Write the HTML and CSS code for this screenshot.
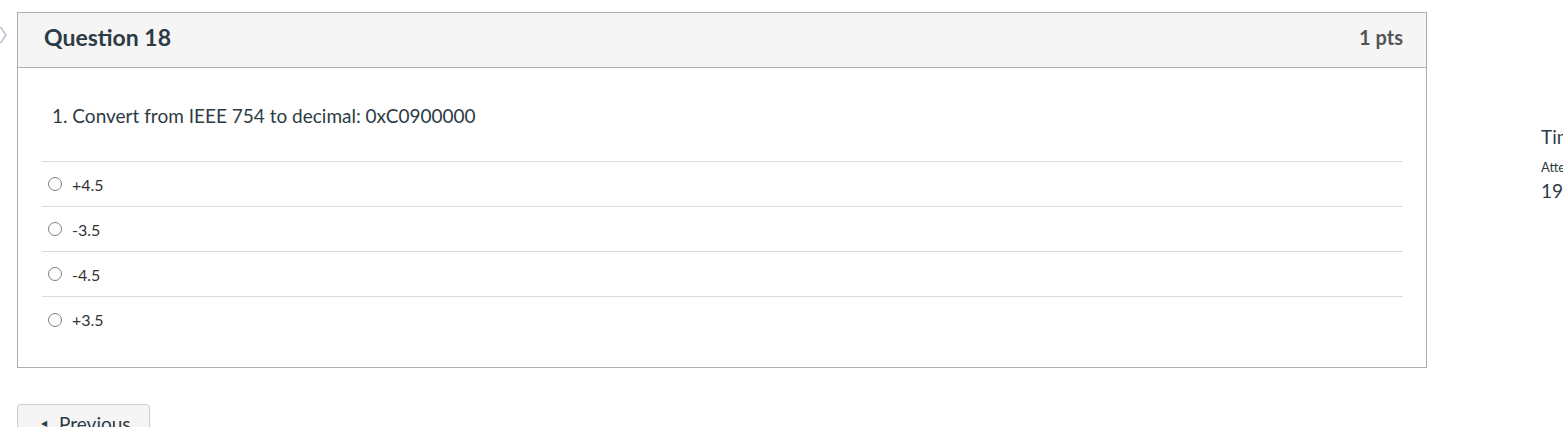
FILE: index.html
```
<!DOCTYPE html>
<html lang="en">
<head>
    <meta charset="UTF-8">
    <title>Quiz - Question 18</title>
    <link rel="stylesheet" href="styles.css">
</head>
<body>
    <div class="page">
        <div class="quiz-column">
            <div class="question-wrap">
                <svg class="flag-marker" width="10" height="20" viewBox="0 0 10 20">
                    <path d="M0.5 2 L6 10 L0.5 18" fill="none" stroke="#b8c4d0" stroke-width="1.6"/>
                </svg>
                <div class="question">
                    <div class="question-header">
                        <span class="question-name">Question 18</span>
                        <span class="question-points">1 pts</span>
                    </div>
                    <div class="question-body">
                        <div class="question-text">1. Convert from IEEE 754 to decimal: 0xC0900000</div>
                        <div class="answers">
                            <label class="answer"><span class="radio"></span>+4.5</label>
                            <label class="answer"><span class="radio"></span>-3.5</label>
                            <label class="answer"><span class="radio"></span>-4.5</label>
                            <label class="answer"><span class="radio"></span>+3.5</label>
                        </div>
                    </div>
                </div>
            </div>
            <div class="nav-buttons">
                <button class="nav-button"><span class="arrow">&#9664;</span>Previous</button>
            </div>
        </div>
        <div class="sidebar">
            <div class="timer-title">Time Running:</div>
            <div class="attempt-label">Attempt due: Oct 19 at 11:59pm</div>
            <div class="timer-value">19 Minutes, 42 Seconds</div>
        </div>
    </div>
</body>
</html>
```

FILE: styles.css
```
html, body {
    margin: 0;
    padding: 0;
    overflow: hidden;
}
body {
    font-family: Lato, "Open Sans", sans-serif;
    color: #2d3b45;
    background: white;
}
.page {
    display: flex;
    padding-top: 12px;
    width: 1800px;
}
.quiz-column {
    width: 1410px;
    flex-shrink: 0;
    margin-left: 17px;
}
.question-wrap {
    position: relative;
}
.flag-marker {
    position: absolute;
    left: -17px;
    top: 13px;
}
.question {
    border: 1px solid #aeaeae;
    background: white;
}
.question-header {
    display: flex;
    justify-content: space-between;
    align-items: center;
    box-sizing: border-box;
    height: 55px;
    padding: 0 23px 7px 26px;
    background: #f5f5f5;
    border-bottom: 1px solid #aeaeae;
}
.question-name {
    font-size: 23px;
    font-weight: bold;
    color: #2d3b45;
}
.question-points {
    font-size: 20px;
    font-weight: bold;
    color: #555;
}
.question-body {
    padding: 34px 23px 25px 24px;
}
.question-text {
    font-size: 19px;
    line-height: 28px;
    padding-left: 10px;
    margin-bottom: 31px;
}
.answer {
    display: flex;
    align-items: center;
    gap: 10px;
    height: 44px;
    padding-left: 6px;
    border-top: 1px solid #dcdcdc;
    font-size: 16px;
    color: #333;
}
.answer:last-child {
    height: 45px;
}
.radio {
    width: 12px;
    height: 12px;
    border: 1px solid #808080;
    border-radius: 50%;
    background: white;
}
.nav-buttons {
    margin-top: 36px;
}
.nav-button {
    display: flex;
    align-items: center;
    font-family: Lato, "Open Sans", sans-serif;
    font-size: 19px;
    color: #2d3b45;
    background: #f5f5f5;
    border: 1px solid #c7cdd1;
    border-radius: 4px;
    width: 133px;
    height: 38px;
    padding: 0 0 0 23px;
}
.arrow {
    font-size: 8px;
    margin-right: 12px;
}
.sidebar {
    margin-left: 114px;
    padding-top: 113px;
    white-space: nowrap;
}
.timer-title {
    font-size: 19px;
    line-height: 24px;
}
.attempt-label {
    font-size: 13px;
    line-height: 16px;
    margin-top: 10px;
}
.timer-value {
    font-size: 19px;
    line-height: 24px;
    margin-top: 4px;
}
```
